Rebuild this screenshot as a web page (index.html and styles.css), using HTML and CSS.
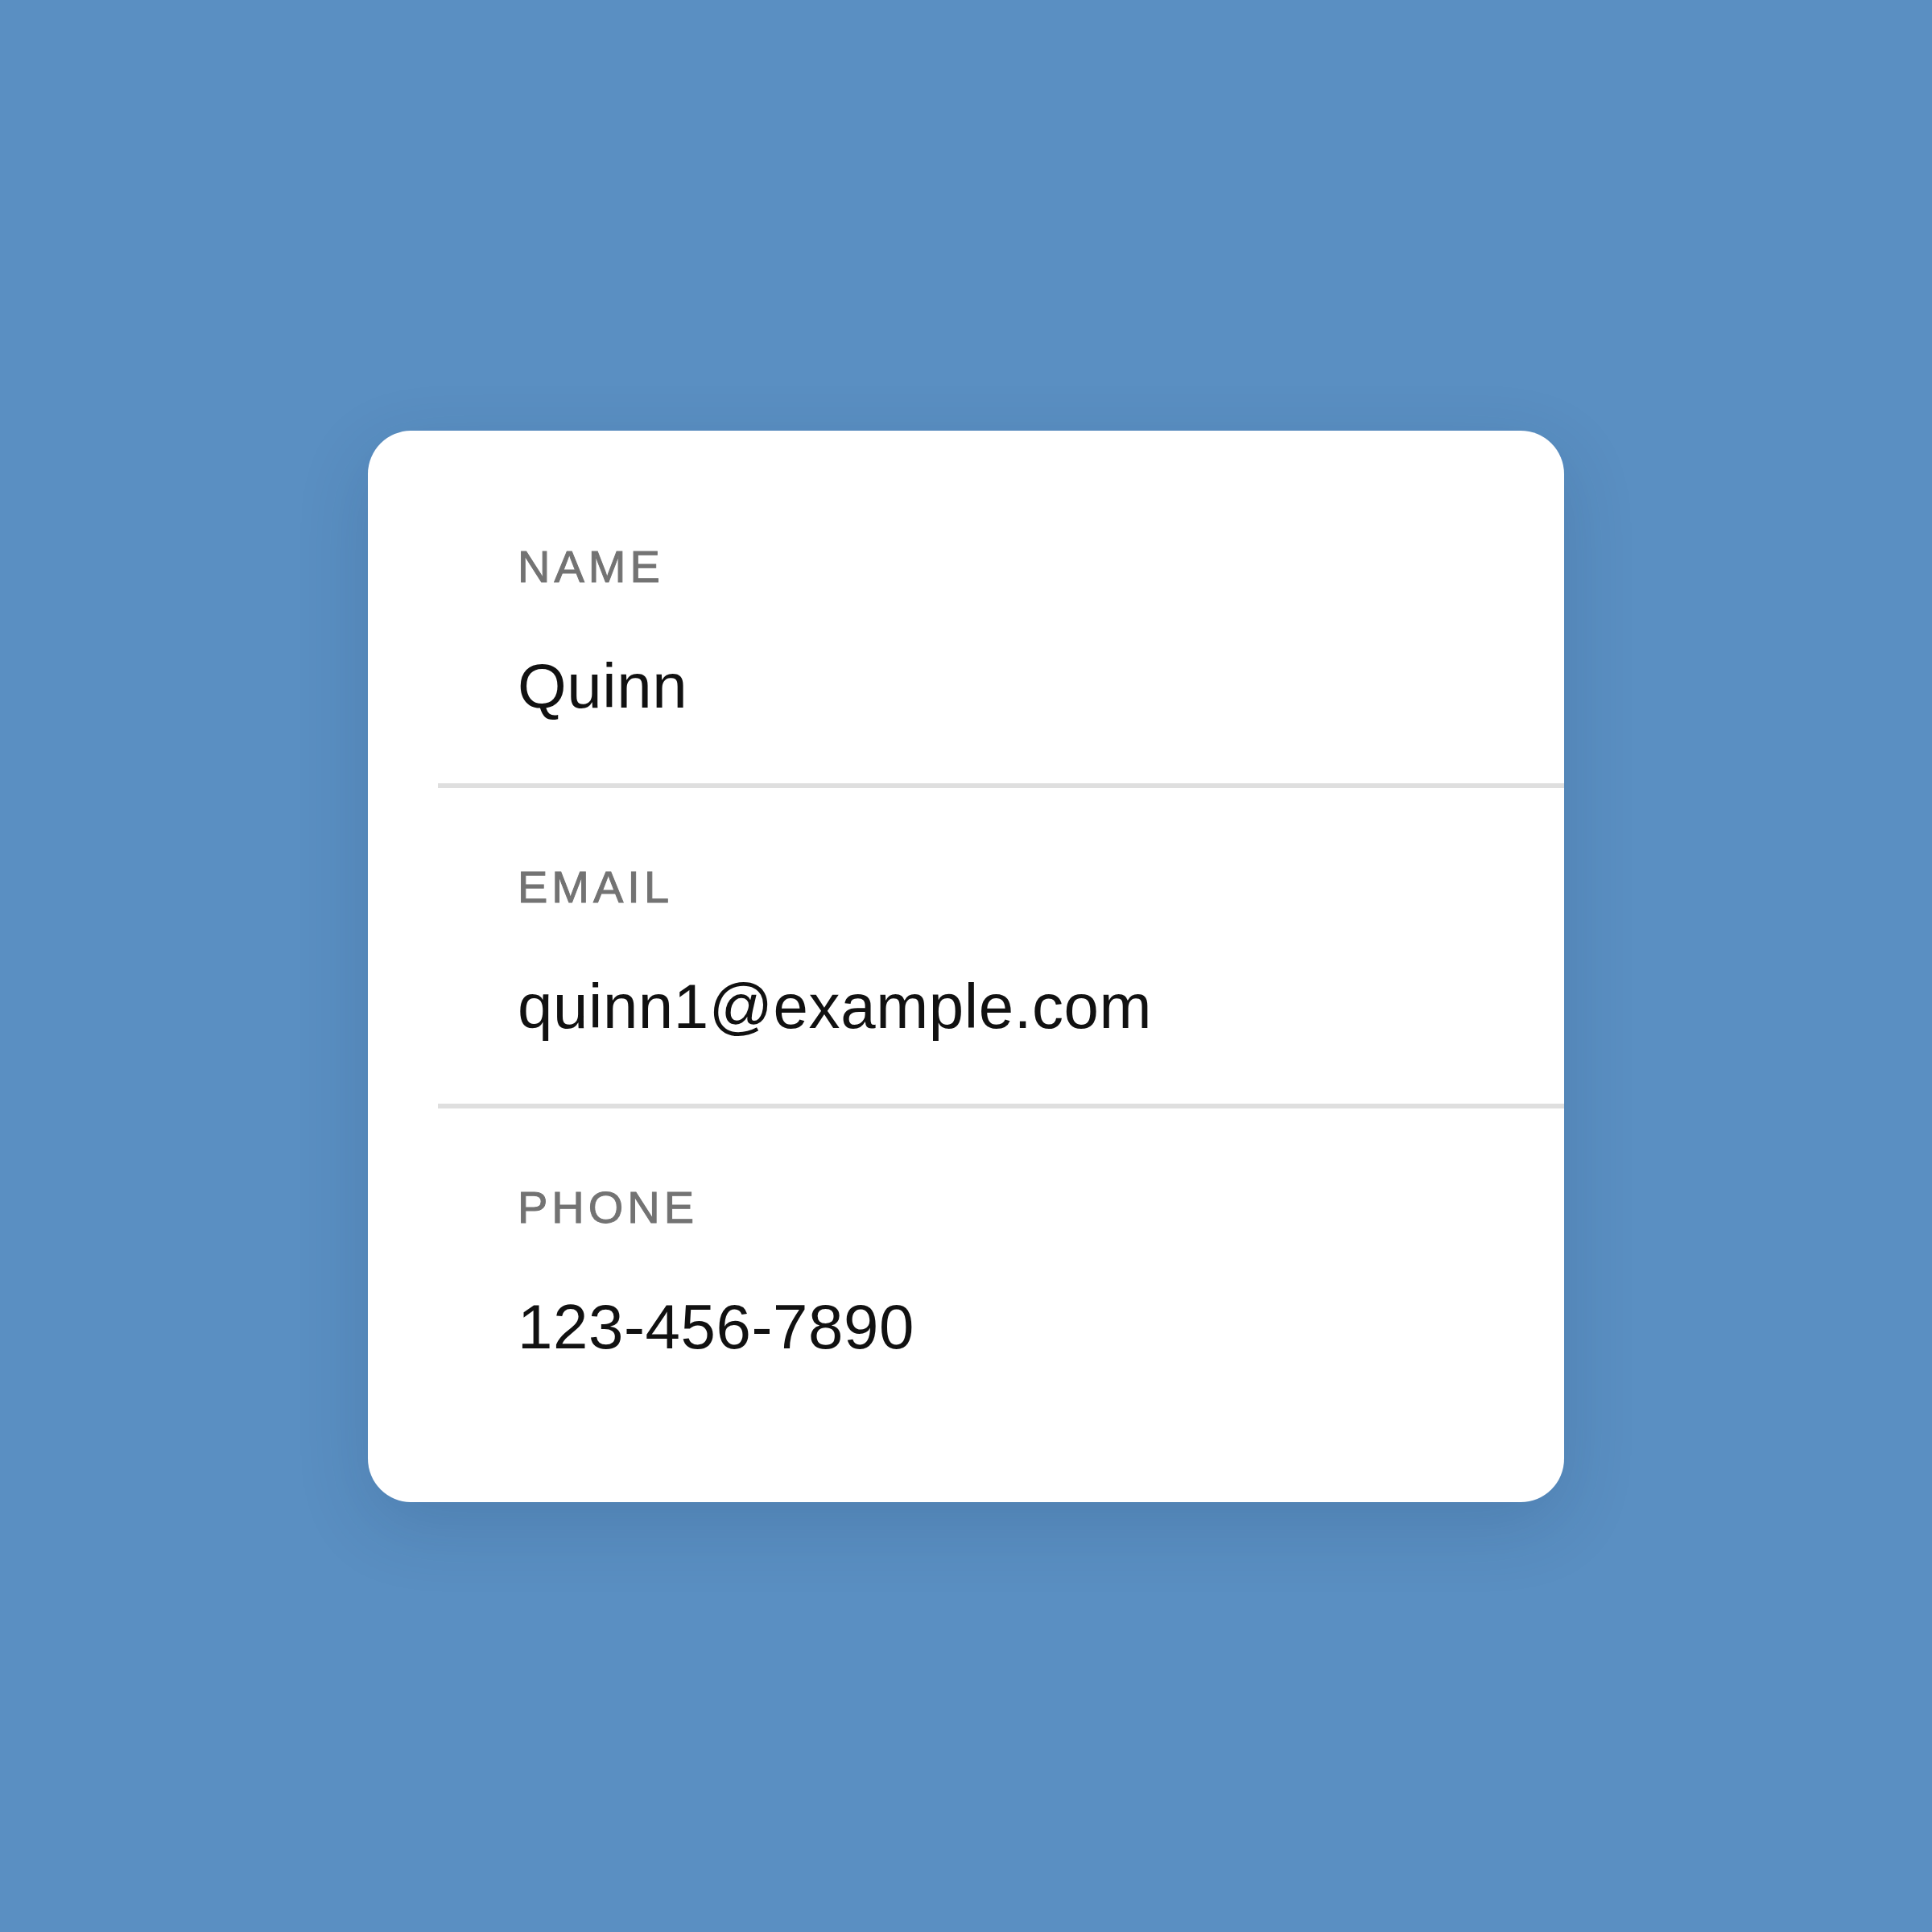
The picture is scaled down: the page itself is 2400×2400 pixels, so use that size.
FILE: index.html
```html
<!DOCTYPE html>
<html lang="en">
<head>
    <meta charset="UTF-8">
    <meta name="viewport" content="width=device-width, initial-scale=1.0">
    <title>Contact</title>
    <link rel="stylesheet" href="styles.css">
</head>
<body>
    <div class="card">
        <div class="field">
            <div class="label">NAME</div>
            <div class="value">Quinn</div>
        </div>
        <div class="field">
            <div class="label">EMAIL</div>
            <div class="value">quinn1@example.com</div>
        </div>
        <div class="field">
            <div class="label">PHONE</div>
            <div class="value">123-456-7890</div>
        </div>
    </div>
</body>
</html>
```

FILE: styles.css
```css
body {
    margin: 0;
    min-height: 100vh;
    background-color: #5a8fc2;
    font-family: "Liberation Sans", Arial, sans-serif;
    display: flex;
    align-items: center;
    justify-content: center;
}
.card {
    width: 1486px;
    box-sizing: border-box;
    padding: 46px 0 97px;
    background-color: #fff;
    border-radius: 54px;
    overflow: hidden;
    box-shadow: 0 28px 90px rgba(20, 45, 80, 0.16);
}
.field {
    margin-left: 87px;
    padding: 95px 0 82px 99px;
    display: flex;
    flex-direction: column;
    gap: 81px;
    border-bottom: 6px solid #dfdfdf;
}
.field:last-child {
    border-bottom: none;
}
.label {
    font-size: 56px;
    line-height: 56px;
    letter-spacing: 5px;
    color: #737373;
    -webkit-text-stroke: 1px #737373;
}
.value {
    font-size: 78px;
    line-height: 78px;
    letter-spacing: 0.6px;
    color: #111;
}
```
